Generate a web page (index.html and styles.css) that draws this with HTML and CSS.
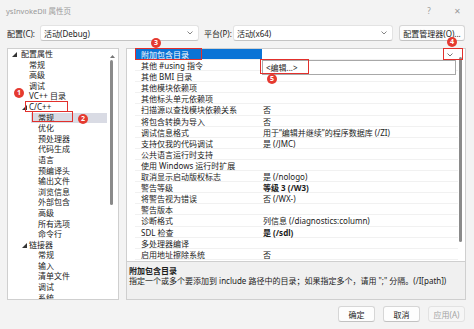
FILE: index.html
```html
<!DOCTYPE html>
<html lang="zh-CN">
<head>
    <meta charset="UTF-8">
    <title>ysInvokeDll 属性页</title>
    <link rel="stylesheet" href="styles.css">
</head>
<body>
<div class="dialog">
    <div class="titlebar">
        <span class="title">ysInvokeDll 属性页</span>
        <span class="tb-help">?</span>
        <span class="tb-close">✕</span>
    </div>

    <div class="config-row">
        <span class="lbl lbl-config">配置(C):</span>
        <div class="combo combo-config">
            <span>活动(Debug)</span>
            <svg class="chev" width="6" height="4" viewBox="0 0 6 4"><polyline points="0.5,0.5 3,3 5.5,0.5" fill="none" stroke="#777" stroke-width="0.9"/></svg>
        </div>
        <span class="lbl lbl-platform">平台(P):</span>
        <div class="combo combo-platform">
            <span>活动(x64)</span>
            <svg class="chev" width="6" height="4" viewBox="0 0 6 4"><polyline points="0.5,0.5 3,3 5.5,0.5" fill="none" stroke="#777" stroke-width="0.9"/></svg>
        </div>
        <button class="btn btn-manager">配置管理器(O)...</button>
    </div>

    <div class="main">
        <div class="tree">
            <ul class="tree-list">
                <li class="l0"><svg class="twisty" width="5" height="5" viewBox="0 0 5 5"><polygon points="5,0 5,5 0,5" fill="#333"/></svg>配置属性</li>
                <li class="l1">常规</li>
                <li class="l1">高级</li>
                <li class="l1">调试</li>
                <li class="l1">VC++ 目录</li>
                <li class="l1 open"><svg class="twisty" width="5" height="5" viewBox="0 0 5 5"><polygon points="5,0 5,5 0,5" fill="#333"/></svg>C/C++</li>
                <li class="l2 sel">常规</li>
                <li class="l2">优化</li>
                <li class="l2">预处理器</li>
                <li class="l2">代码生成</li>
                <li class="l2">语言</li>
                <li class="l2">预编译头</li>
                <li class="l2">输出文件</li>
                <li class="l2">浏览信息</li>
                <li class="l2">外部包含</li>
                <li class="l2">高级</li>
                <li class="l2">所有选项</li>
                <li class="l2">命令行</li>
                <li class="l1 open"><svg class="twisty" width="5" height="5" viewBox="0 0 5 5"><polygon points="5,0 5,5 0,5" fill="#333"/></svg>链接器</li>
                <li class="l2">常规</li>
                <li class="l2">输入</li>
                <li class="l2">清单文件</li>
                <li class="l2">调试</li>
                <li class="l2">系统</li>
            </ul>
            <div class="vscroll tree-scroll">
                <svg class="up" width="5" height="3" viewBox="0 0 5 3"><polygon points="0,3 2.5,0 5,3" fill="#777"/></svg>
                <span class="thumb"></span>
            </div>
        </div>

        <div class="right">
            <div class="grid">
                <div class="grid-rows">
                    <div class="row sel">
                        <span class="gutter"></span><span class="name">附加包含目录</span>
                        <span class="value"><span class="drop-btn"><svg width="6" height="4" viewBox="0 0 6 4"><polyline points="0.5,0.5 3,3 5.5,0.5" fill="none" stroke="#666" stroke-width="0.9"/></svg></span></span>
                    </div>
                    <div class="row"><span class="gutter"></span><span class="name">其他 #using 指令</span><span class="value"></span></div>
                    <div class="row"><span class="gutter"></span><span class="name">其他 BMI 目录</span><span class="value"></span></div>
                    <div class="row"><span class="gutter"></span><span class="name">其他模块依赖项</span><span class="value"></span></div>
                    <div class="row"><span class="gutter"></span><span class="name">其他标头单元依赖项</span><span class="value"></span></div>
                    <div class="row"><span class="gutter"></span><span class="name">扫描源以查找模块依赖关系</span><span class="value">否</span></div>
                    <div class="row"><span class="gutter"></span><span class="name">将包含转换为导入</span><span class="value">否</span></div>
                    <div class="row"><span class="gutter"></span><span class="name">调试信息格式</span><span class="value">用于“编辑并继续”的程序数据库 (/ZI)</span></div>
                    <div class="row"><span class="gutter"></span><span class="name">支持仅我的代码调试</span><span class="value">是 (/JMC)</span></div>
                    <div class="row"><span class="gutter"></span><span class="name">公共语言运行时支持</span><span class="value"></span></div>
                    <div class="row"><span class="gutter"></span><span class="name">使用 Windows 运行时扩展</span><span class="value"></span></div>
                    <div class="row"><span class="gutter"></span><span class="name">取消显示启动版权标志</span><span class="value">是 (/nologo)</span></div>
                    <div class="row"><span class="gutter"></span><span class="name">警告等级</span><span class="value bold">等级 3 (/W3)</span></div>
                    <div class="row"><span class="gutter"></span><span class="name">将警告视为错误</span><span class="value">否 (/WX-)</span></div>
                    <div class="row"><span class="gutter"></span><span class="name">警告版本</span><span class="value"></span></div>
                    <div class="row"><span class="gutter"></span><span class="name">诊断格式</span><span class="value">列信息 (/diagnostics:column)</span></div>
                    <div class="row"><span class="gutter"></span><span class="name">SDL 检查</span><span class="value bold">是 (/sdl)</span></div>
                    <div class="row"><span class="gutter"></span><span class="name">多处理器编译</span><span class="value"></span></div>
                    <div class="row"><span class="gutter"></span><span class="name">启用地址擦除系统</span><span class="value">否</span></div>
                    <div class="row"><span class="gutter"></span><span class="name">启用模糊支持(实验性)</span><span class="value">否</span></div>
                </div>
                <div class="vscroll grid-scroll"><span class="thumb"></span></div>
                <!-- 下拉弹出框 -->
                <div class="dropdown">&lt;编辑...&gt;</div>
            </div>
            <div class="desc">
                <div class="desc-title">附加包含目录</div>
                <div class="desc-text">指定一个或多个要添加到 include 路径中的目录；如果指定多个，请用 ";" 分隔。(/I[path])</div>
            </div>
        </div>
    </div>

    <div class="footer">
        <button class="btn btn-ok">确定</button>
        <button class="btn btn-cancel">取消</button>
        <button class="btn btn-apply">应用(A)</button>
    </div>

    <!-- 标注 -->
    <span class="mark mark-cpp"></span>
    <span class="mark mark-general"></span>
    <span class="mark mark-include"></span>
    <span class="mark mark-drop"></span>
    <span class="mark mark-edit"></span>
    <span class="badge badge-1">1</span>
    <span class="badge badge-2">2</span>
    <span class="badge badge-3">3</span>
    <span class="badge badge-4">4</span>
    <span class="badge badge-5">5</span>
</div>
</body>
</html>
```

FILE: styles.css
```css
* {
    margin: 0;
    padding: 0;
    box-sizing: border-box;
}
body {
    background-color: #f3f3f3;
}
.dialog {
    position: relative;
    width: 474px;
    height: 329px;
    overflow: hidden;
    background-color: #f3f3f3;
    font-family: "Noto Sans", "Noto Sans CJK SC", sans-serif;
    font-size: 8px;
    color: #1b1b1b;
}

/* 标题栏 */
.titlebar {
    display: flex;
    align-items: center;
    height: 20px;
    padding-left: 6px;
    color: #9a9a9a;
}
.titlebar .title {
    flex: 1;
    font-size: 7.5px;
}
.tb-help {
    width: 10px;
    text-align: center;
    font-size: 8px;
}
.tb-close {
    width: 10px;
    margin: 0 12px 0 18px;
    text-align: center;
    font-size: 8px;
}

/* 配置行 */
.config-row {
    display: flex;
    align-items: center;
    height: 16px;
    margin: 5px 0 0 7px;
}
.lbl-config {
    width: 33px;
}
.lbl-platform {
    width: 29px;
    margin-left: 5px;
}
.combo {
    display: flex;
    align-items: center;
    justify-content: space-between;
    height: 16px;
    padding: 0 5px 0 3px;
    background-color: #fff;
    border: 1px solid #e3e3e3;
    border-bottom-color: #c4c4c4;
    border-radius: 3px;
}
.combo-config {
    width: 159px;
}
.combo-platform {
    width: 160px;
}
.btn {
    height: 16px;
    font-family: inherit;
    font-size: 8px;
    color: #1b1b1b;
    background-color: #fdfdfd;
    border: 1px solid #d6d6d6;
    border-bottom-color: #c2c2c2;
    border-radius: 3px;
    outline: none;
}
.btn-manager {
    width: 66px;
    margin-left: 6px;
}

/* 主体 */
.main {
    display: flex;
    gap: 7px;
    height: 252px;
    margin: 7px 0 0 7px;
}
.tree {
    display: flex;
    width: 112px;
    background-color: #fff;
    border: 1px solid #cfcfcf;
    overflow: hidden;
}
.tree-list {
    flex: 1;
    list-style: none;
}
.tree-list li {
    height: 10.6px;
    line-height: 10.6px;
    white-space: nowrap;
}
.tree-list .l0 {
    padding-left: 4px;
}
.tree-list .l1 {
    padding-left: 21px;
}
.tree-list .l1.open {
    padding-left: 14px;
}
.tree-list .l2 {
    padding-left: 30px;
}
.tree-list .sel {
    margin: 0 1px 0 23px;
    padding-left: 7px;
    background-color: #d9dbe4;
}
.twisty {
    margin-right: 4px;
    vertical-align: 0;
}
.l1 .twisty {
    margin-right: 2px;
}
.vscroll {
    position: relative;
    width: 10px;
}
.tree-scroll .up {
    position: absolute;
    left: 2px;
    top: 6px;
}
.vscroll .thumb {
    position: absolute;
    left: 3px;
    width: 3px;
    border-radius: 2px;
    background-color: #8a8a8a;
}
.tree-scroll .thumb {
    left: 2px;
    top: 11px;
    height: 145px;
}

/* 属性表 */
.right {
    display: flex;
    flex-direction: column;
    width: 340px;
}
.grid {
    position: relative;
    display: flex;
    height: 214px;
    background-color: #fff;
    border: 1px solid #cfcfcf;
    overflow: hidden;
}
.grid-rows {
    flex: 1;
}
.row {
    display: flex;
    height: 11.1px;
    line-height: 11.1px;
    white-space: nowrap;
}
.row .gutter {
    width: 8px;
}
.row .name {
    width: 127px;
    padding-left: 6px;
    box-shadow: inset 0 -1px #f1f1f1;
}
.row .value {
    display: flex;
    flex: 1;
    padding-left: 1px;
    box-shadow: inset 0 -1px #f1f1f1;
}
.row .bold {
    font-weight: bold;
}
.row.sel .name {
    color: #fff;
    background-color: #0a74d6;
}
.drop-btn {
    display: flex;
    align-items: center;
    justify-content: center;
    width: 16px;
    margin-left: auto;
}
.grid-scroll {
    width: 7px;
}
.grid-scroll .thumb {
    left: 1px;
    top: 8px;
    height: 185px;
}
.dropdown {
    position: absolute;
    left: 135px;
    top: 11px;
    width: 194px;
    height: 15px;
    line-height: 13px;
    padding-left: 3px;
    background-color: #fff;
    border: 1px solid #a8a8a8;
}
.desc {
    height: 38px;
    padding: 4px 2px 0;
    background-color: #f0f0f0;
    border: 1px solid #cfcfcf;
    border-top: none;
    line-height: 10px;
    white-space: nowrap;
}
.desc-title {
    font-weight: bold;
}

/* 底部按钮 */
.footer {
    display: flex;
    justify-content: flex-end;
    gap: 8px;
    margin-top: 6px;
    padding-right: 9px;
}
.footer .btn {
    width: 37px;
}
.footer .btn-apply {
    color: #a3a3a3;
    background-color: #f6f6f6;
    border-color: #e2e2e2;
}

/* 红色标注 */
.mark {
    position: absolute;
    border: 1.5px solid #e2302c;
}
.mark-cpp {
    left: 25px;
    top: 101px;
    width: 43px;
    height: 11px;
}
.mark-general {
    left: 32px;
    top: 111px;
    width: 41px;
    height: 11px;
}
.mark-include {
    left: 135px;
    top: 48px;
    width: 67px;
    height: 12px;
}
.mark-drop {
    left: 443px;
    top: 48px;
    width: 20px;
    height: 12px;
}
.mark-edit {
    left: 260px;
    top: 59px;
    width: 49px;
    height: 15px;
}
.badge {
    position: absolute;
    width: 10px;
    height: 10px;
    line-height: 10px;
    border-radius: 50%;
    background-color: #e53a30;
    color: #fff;
    font-size: 7px;
    font-weight: bold;
    text-align: center;
}
.badge-1 {
    left: 14px;
    top: 88px;
}
.badge-2 {
    left: 78px;
    top: 114px;
}
.badge-3 {
    left: 151px;
    top: 38px;
}
.badge-4 {
    left: 447px;
    top: 37px;
}
.badge-5 {
    left: 267px;
    top: 74px;
}
```
